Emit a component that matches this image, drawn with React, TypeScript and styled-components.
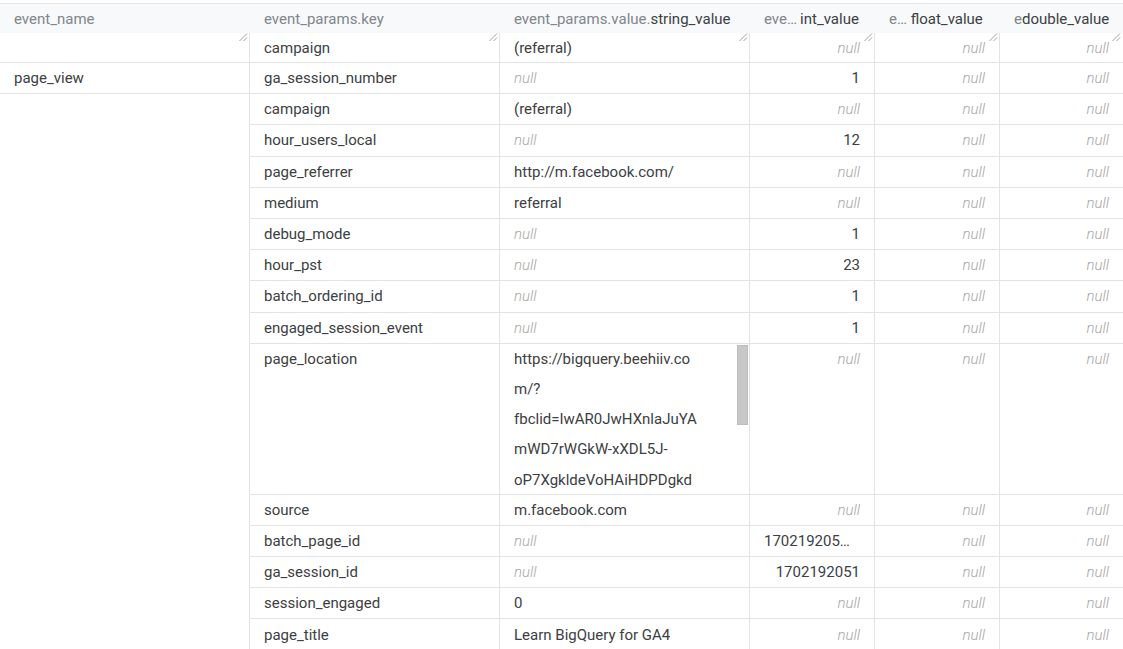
import React from "react";
import styled, { createGlobalStyle } from "styled-components";

const GlobalStyle = createGlobalStyle`
  html, body { margin: 0; padding: 0; background: #ffffff; }
  body { font-family: Roboto, "Noto Sans", "Liberation Sans", sans-serif; overflow: hidden; }
`;

const COLS = "250px 250px 250px 125px 125px 1fr";

const Grid = styled.div`
  width: 1123px;
  height: 649px;
  overflow: hidden;
  padding-top: 3px;
  box-sizing: border-box;
  display: flex;
  flex-direction: column;
`;

const HeaderRow = styled.div`
  display: grid;
  grid-template-columns: ${COLS};
  height: 30px;
  box-sizing: border-box;
  border-top: 1px solid #e3e3e3;
  background: #f8f9fa;
  position: relative;
  z-index: 2;
  flex: none;
`;

const HeaderCell = styled.div`
  position: relative;
  display: flex;
  align-items: center;
  padding: 1px 14px 0 14px;
  font-size: 15px;
  white-space: nowrap;
  overflow: visible;
  color: #80868b;
`;

const HeadStrong = styled.span`
  color: #3c4043;
  font-weight: 400;
`;

const HandleWrap = styled.span`
  position: absolute;
  right: 2px;
  bottom: -5px;
  width: 10px;
  height: 10px;
  display: block;
`;

const Handle = () => (
  <HandleWrap>
    <svg width="10" height="10" viewBox="0 0 10 10">
      <line x1="1.5" y1="9" x2="9" y2="1.5" stroke="#a0a0a0" strokeWidth="1" />
      <line x1="5.5" y1="9" x2="9" y2="5.5" stroke="#a0a0a0" strokeWidth="1" />
    </svg>
  </HandleWrap>
);

const Body = styled.div`
  display: flex;
  flex-direction: column;
`;

const Row = styled.div<{ $h?: number }>`
  display: grid;
  grid-template-columns: ${COLS};
  height: ${(p) => p.$h ?? 31.2}px;
  flex: none;
`;

const Cell = styled.div<{ $right?: boolean; $noBottom?: boolean; $last?: boolean; $top?: boolean }>`
  box-sizing: border-box;
  padding: 0 14px;
  display: flex;
  align-items: ${(p) => (p.$top ? "flex-start" : "center")};
  justify-content: ${(p) => (p.$right ? "flex-end" : "flex-start")};
  font-size: 15px;
  color: #3c4043;
  white-space: nowrap;
  overflow: hidden;
  border-right: ${(p) => (p.$last ? "none" : "1px solid #e3e3e3")};
  border-bottom: ${(p) => (p.$noBottom ? "1px solid transparent" : "1px solid #e3e3e3")};
  position: relative;
`;

const Truncated = styled.span`
  flex: 1;
  min-width: 0;
  white-space: nowrap;
  text-align: left;
`;

const Null = styled.span`
  font-style: italic;
  color: #a6a6a6;
  font-weight: 300;
`;

const Wrapped = styled.div`
  display: flex;
  flex-direction: column;
  line-height: 30.2px;
`;

const ScrollThumb = styled.div`
  position: absolute;
  right: 1px;
  top: 1px;
  width: 11px;
  height: 80px;
  background: #c8c8c8;
  border: 1px solid #bdbdbd;
  box-sizing: border-box;
`;

type V = string | null;
type RowData = { name?: string; leftLine: boolean; key: string; str: V; int: V; flt: V; dbl: V };

const rows: RowData[] = [
  { leftLine: true, key: "campaign", str: "(referral)", int: null, flt: null, dbl: null },
  { name: "page_view", leftLine: true, key: "ga_session_number", str: null, int: "1", flt: null, dbl: null },
  { leftLine: false, key: "campaign", str: "(referral)", int: null, flt: null, dbl: null },
  { leftLine: false, key: "hour_users_local", str: null, int: "12", flt: null, dbl: null },
  { leftLine: false, key: "page_referrer", str: "http://m.facebook.com/", int: null, flt: null, dbl: null },
  { leftLine: false, key: "medium", str: "referral", int: null, flt: null, dbl: null },
  { leftLine: false, key: "debug_mode", str: null, int: "1", flt: null, dbl: null },
  { leftLine: false, key: "hour_pst", str: null, int: "23", flt: null, dbl: null },
  { leftLine: false, key: "batch_ordering_id", str: null, int: "1", flt: null, dbl: null },
  { leftLine: false, key: "engaged_session_event", str: null, int: "1", flt: null, dbl: null },
  { leftLine: false, key: "page_location", str: "__LOC__", int: null, flt: null, dbl: null },
  { leftLine: false, key: "source", str: "m.facebook.com", int: null, flt: null, dbl: null },
  { leftLine: false, key: "batch_page_id", str: null, int: "170219205…", flt: null, dbl: null },
  { leftLine: false, key: "ga_session_id", str: null, int: "1702192051", flt: null, dbl: null },
  { leftLine: false, key: "session_engaged", str: "0", int: null, flt: null, dbl: null },
  { leftLine: false, key: "page_title", str: "Learn BigQuery for GA4", int: null, flt: null, dbl: null },
];

const locLines = [
  "https://bigquery.beehiiv.co",
  "m/?",
  "fbclid=IwAR0JwHXnlaJuYA",
  "mWD7rWGkW-xXDL5J-",
  "oP7XgkldeVoHAiHDPDgkd",
];

const Val = ({ v }: { v: V }) => {
  if (v === null) return <Null>null</Null>;
  if (v.endsWith("…")) return <Truncated>{v}</Truncated>;
  return <>{v}</>;
};

export default function App() {
  return (
    <>
      <GlobalStyle />
      <Grid>
        <HeaderRow>
          <HeaderCell>
            event_name
            <Handle />
          </HeaderCell>
          <HeaderCell>
            event_params.key
            <Handle />
          </HeaderCell>
          <HeaderCell>
            event_params.value.<HeadStrong>string_value</HeadStrong>
            <Handle />
          </HeaderCell>
          <HeaderCell>
            eve…{"\u2009"}<HeadStrong>int_value</HeadStrong>
            <Handle />
          </HeaderCell>
          <HeaderCell>
            e…&nbsp;<HeadStrong>float_value</HeadStrong>
            <Handle />
          </HeaderCell>
          <HeaderCell>
            e<HeadStrong>double_value</HeadStrong>
            <Handle />
          </HeaderCell>
        </HeaderRow>
        <Body>
          {rows.map((r, i) => {
            const tall = r.str === "__LOC__";
            const h = i === 0 ? 30 : tall ? 151 : 31.2;
            return (
              <Row key={i} $h={h}>
                <Cell $noBottom={!r.leftLine}>{r.name ?? ""}</Cell>
                <Cell $top={tall}>
                  {tall ? <Wrapped><span>{r.key}</span></Wrapped> : r.key}
                </Cell>
                <Cell $top={tall}>
                  {tall ? (
                    <>
                      <Wrapped>
                        {locLines.map((l) => (
                          <span key={l}>{l}</span>
                        ))}
                      </Wrapped>
                      <ScrollThumb />
                    </>
                  ) : (
                    <Val v={r.str} />
                  )}
                </Cell>
                <Cell $right $top={tall}>
                  {tall ? <Wrapped><Val v={r.int} /></Wrapped> : <Val v={r.int} />}
                </Cell>
                <Cell $right $top={tall}>
                  {tall ? <Wrapped><Val v={r.flt} /></Wrapped> : <Val v={r.flt} />}
                </Cell>
                <Cell $right $last $top={tall}>
                  {tall ? <Wrapped><Val v={r.dbl} /></Wrapped> : <Val v={r.dbl} />}
                </Cell>
              </Row>
            );
          })}
        </Body>
      </Grid>
    </>
  );
}
